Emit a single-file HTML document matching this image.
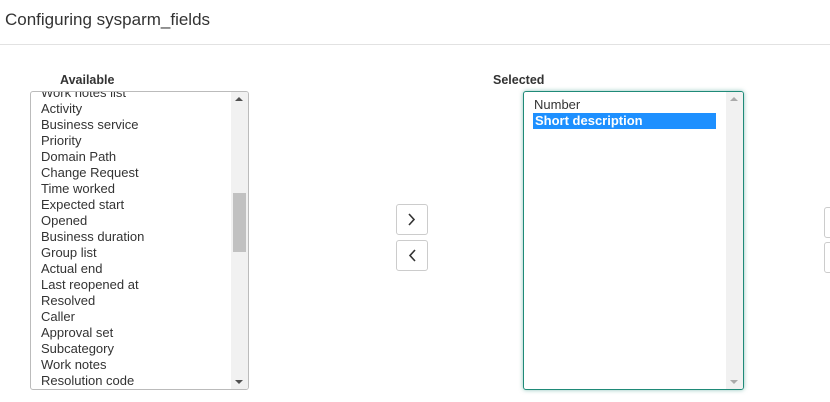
<!DOCTYPE html>
<html><head><meta charset="utf-8"><style>
*{margin:0;padding:0;box-sizing:border-box}
body{width:830px;height:402px;background:#fff;font-family:"Liberation Sans",Arial,sans-serif;color:#333;position:relative;overflow:hidden}
.title{position:absolute;left:5px;top:10px;font-size:17px;color:#333}
.hr{position:absolute;left:0;top:44px;width:830px;height:1px;background:#e2e2e2}
.lbl{position:absolute;top:73px;font-size:12.5px;font-weight:bold;color:#333}
.box{position:absolute;top:91px;height:299px;border:1px solid #bbb;border-radius:3px;overflow:hidden;background:#fff}
.item{position:absolute;left:10px;font-size:13px;line-height:16px;white-space:nowrap;color:#333}
.sb{position:absolute;top:0;right:0;width:17px;height:100%;background:#f1f1f1}
.btn{position:absolute;width:32px;height:31px;border:1px solid #ccc;border-radius:3px;background:#fff}
</style></head><body>
<div class="title">Configuring sysparm_fields</div>
<div class="hr"></div>
<div class="lbl" style="left:60px">Available</div>
<div class="lbl" style="left:493px">Selected</div>

<div class="box" style="left:30px;width:219px">
<div class="item" style="top:-7px">Work notes list</div>
<div class="item" style="top:9px">Activity</div>
<div class="item" style="top:25px">Business service</div>
<div class="item" style="top:41px">Priority</div>
<div class="item" style="top:57px">Domain Path</div>
<div class="item" style="top:73px">Change Request</div>
<div class="item" style="top:89px">Time worked</div>
<div class="item" style="top:105px">Expected start</div>
<div class="item" style="top:121px">Opened</div>
<div class="item" style="top:137px">Business duration</div>
<div class="item" style="top:153px">Group list</div>
<div class="item" style="top:169px">Actual end</div>
<div class="item" style="top:185px">Last reopened at</div>
<div class="item" style="top:201px">Resolved</div>
<div class="item" style="top:217px">Caller</div>
<div class="item" style="top:233px">Approval set</div>
<div class="item" style="top:249px">Subcategory</div>
<div class="item" style="top:265px">Work notes</div>
<div class="item" style="top:281px">Resolution code</div>
<div class="sb">
<div style="position:absolute;left:4px;top:5px;border-left:4px solid transparent;border-right:4px solid transparent;border-bottom:4px solid #505050"></div>
<div style="position:absolute;left:2px;top:101px;width:13px;height:59px;background:#c1c1c1"></div>
<div style="position:absolute;left:4px;bottom:5px;border-left:4px solid transparent;border-right:4px solid transparent;border-top:4px solid #505050"></div>
</div>
</div>

<div class="btn" style="left:396px;top:204px"><svg width="30" height="29"><path d="M12 9 L17 14.5 L12 20" fill="none" stroke="#333" stroke-width="1.6"/></svg></div>
<div class="btn" style="left:396px;top:240px"><svg width="30" height="29"><path d="M18 9 L13 14.5 L18 20" fill="none" stroke="#333" stroke-width="1.6"/></svg></div>

<div class="box" style="left:523px;width:221px;border:1px solid #1f8a78;box-shadow:0 0 4px rgba(31,138,120,.5)">
<div class="item" style="top:5px">Number</div>
<div class="item" style="top:21px;left:9px;width:183px;height:16px;background:#1e90ff;color:#fff;padding-left:2px;font-weight:bold">Short description</div>
<div class="sb">
<div style="position:absolute;left:4px;top:5px;border-left:4px solid transparent;border-right:4px solid transparent;border-bottom:4px solid #aaa"></div>
<div style="position:absolute;left:4px;bottom:5px;border-left:4px solid transparent;border-right:4px solid transparent;border-top:4px solid #aaa"></div>
</div>
</div>

<div class="btn" style="left:824px;top:207px"></div>
<div class="btn" style="left:824px;top:242px"></div>
</body></html>
